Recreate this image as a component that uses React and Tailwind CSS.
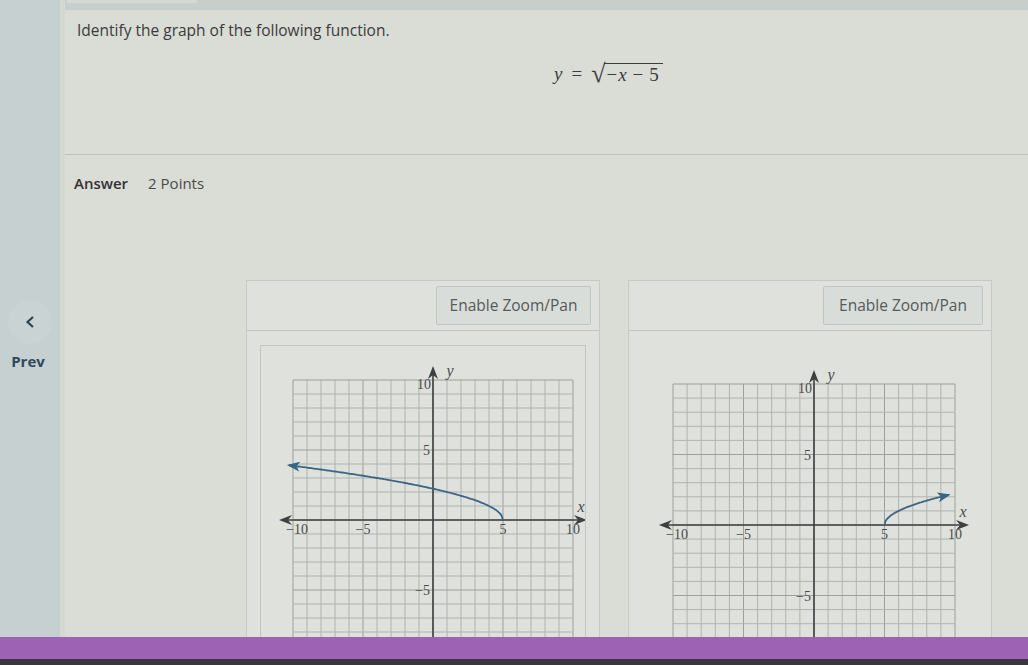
import React from "react";

function Graph({ w, h, ox, oy, u, dir }) {
  const vlines = [];
  for (let i = -10; i <= 10; i++) {
    vlines.push(
      <line key={"v" + i} x1={ox + i * u} y1={oy - 10 * u} x2={ox + i * u} y2={h} stroke={i % 5 === 0 ? "#9aa19c" : "#aeb4af"} strokeWidth="1" />
    );
  }
  const hlines = [];
  for (let j = 10; j >= -12; j--) {
    const y = oy - j * u;
    if (y > h) continue;
    hlines.push(
      <line key={"h" + j} x1={ox - 10 * u} y1={y} x2={ox + 10 * u} y2={y} stroke={j % 5 === 0 ? "#9aa19c" : "#aeb4af"} strokeWidth="1" />
    );
  }
  const pts = [];
  if (dir < 0) {
    for (let x = 5; x >= -10.3; x -= 0.1) pts.push([x, Math.sqrt(Math.max(0, 5 - x))]);
  } else {
    for (let x = 5; x <= 9.6; x += 0.05) pts.push([x, Math.sqrt(Math.max(0, x - 5))]);
  }
  const d = pts.map((p, i) => (i === 0 ? "M" : "L") + (ox + p[0] * u).toFixed(1) + " " + (oy - p[1] * u).toFixed(1)).join(" ");
  const last = pts[pts.length - 1];
  const prev = pts[pts.length - 4];
  const lx = ox + last[0] * u, ly = oy - last[1] * u;
  const px = ox + prev[0] * u, py = oy - prev[1] * u;
  const ang = Math.atan2(ly - py, lx - px);
  const ah = 11, aw = 5;
  const bx = lx - ah * Math.cos(ang), by = ly - ah * Math.sin(ang);
  const arrow = `M${(lx + 2 * Math.cos(ang)).toFixed(1)} ${(ly + 2 * Math.sin(ang)).toFixed(1)} L${(bx + aw * Math.sin(ang)).toFixed(1)} ${(by - aw * Math.cos(ang)).toFixed(1)} L${(bx + 3 * Math.cos(ang)).toFixed(1)} ${(by + 3 * Math.sin(ang)).toFixed(1)} L${(bx - aw * Math.sin(ang)).toFixed(1)} ${(by + aw * Math.cos(ang)).toFixed(1)} Z`;
  const txt = { fontFamily: "'Liberation Serif', serif", fontSize: 14, fill: "#4a4a4a" };
  const xl = ox - 11 * u, xr = ox + 11 * u, yt = oy - 11 * u;
  return (
    <svg width={w} height={h} className="block">
      {vlines}
      {hlines}
      <line x1={xl + 4} y1={oy} x2={xr - 4} y2={oy} stroke="#3f3f3f" strokeWidth="1.6" />
      <path d={`M${xl} ${oy} L${xl + 13} ${oy - 5} L${xl + 9} ${oy} L${xl + 13} ${oy + 5} Z`} fill="#3f3f3f" />
      <path d={`M${xr} ${oy} L${xr - 13} ${oy - 5} L${xr - 9} ${oy} L${xr - 13} ${oy + 5} Z`} fill="#3f3f3f" />
      <line x1={ox} y1={yt + 4} x2={ox} y2={h} stroke="#3f3f3f" strokeWidth="1.6" />
      <path d={`M${ox} ${yt} L${ox - 5} ${yt + 13} L${ox} ${yt + 9} L${ox + 5} ${yt + 13} Z`} fill="#3f3f3f" />
      <path d={d} fill="none" stroke="#3b6585" strokeWidth="1.8" />
      <path d={arrow} fill="#3b6585" />
      <text x={ox - 2} y={oy - 10 * u + 9} textAnchor="end" style={txt}>10</text>
      <text x={ox - 3} y={oy - 5 * u + 5} textAnchor="end" style={txt}>5</text>
      <text x={ox - 3} y={oy + 5 * u + 5} textAnchor="end" style={txt}>−5</text>
      <text x={ox - 10 * u + 4} y={oy + 14} textAnchor="middle" style={txt}>−10</text>
      <text x={ox - 5 * u} y={oy + 14} textAnchor="middle" style={txt}>−5</text>
      <text x={ox + 5 * u} y={oy + 14} textAnchor="middle" style={txt}>5</text>
      <text x={ox + 10 * u} y={oy + 14} textAnchor="middle" style={txt}>10</text>
      <text x={ox + 10 * u + 8} y={oy - 8} textAnchor="middle" style={{ ...txt, fontStyle: "italic", fontSize: 16 }}>x</text>
      <text x={ox + 17} y={yt + 10} textAnchor="middle" style={{ ...txt, fontStyle: "italic", fontSize: 16 }}>y</text>
    </svg>
  );
}

function Card({ width, btnW, children, innerBorder }) {
  return (
    <div className="flex flex-col border border-[#c6cac5] bg-[#dfe1dc] h-[360px] overflow-hidden shrink-0" style={{ width }}>
      <div className="flex justify-end items-center h-[50px] shrink-0 border-b border-[#c2c6c1] pr-[8px]">
        <button className="h-[39px] border border-[#c0c5c1] bg-[#d9ddd9] rounded-[2px] text-[15.5px] text-[#555a5a] font-['Open_Sans',sans-serif]" style={{ width: btnW }}>
          Enable Zoom/Pan
        </button>
      </div>
      <div className="flex-1 min-h-0 px-[13px] pt-[14px]">
        <div className={"h-full overflow-hidden border " + (innerBorder ? "border-[#c2c6c1]" : "border-transparent")}>{children}</div>
      </div>
    </div>
  );
}

export default function App() {
  return (
    <div className="w-[1028px] h-[665px] overflow-hidden flex flex-col bg-[#dadcd6] font-['Open_Sans',sans-serif]">
      <div className="flex flex-1 min-h-0">
        <div className="w-[65px] shrink-0 bg-[#c6d0d1] flex flex-col items-center border-r-[5px] border-[#d5d9d3]">
          <div className="mt-[300px] w-[44px] h-[44px] rounded-full bg-[#c9d3d4] flex items-center justify-center">
            <svg width="12" height="14" viewBox="0 0 12 14"><path d="M9 2 L3.5 7 L9 12" fill="none" stroke="#2c4556" strokeWidth="2.2" /></svg>
          </div>
          <div className="mt-[6px] mr-[4px] text-[15px] font-bold text-[#2e4a5c] leading-[22px]">Prev</div>
        </div>
        <div className="flex-1 flex flex-col min-w-0">
          <div className="h-[10px] bg-[#c8cfcb] flex shrink-0">
            <div className="ml-[2px] w-[130px] h-[3px] bg-[#d4d9d5]" />
          </div>
          <div className="h-[145px] shrink-0 border-b border-[#bfc3be] flex flex-col pl-[12px]">
            <div className="mt-[9px] text-[15.5px] text-[#3b3b3b] leading-[22px]">Identify the graph of the following function.</div>
            <div className="mt-[20px] pl-[477px] flex items-end text-[19px] text-[#3d3d3d] font-['Liberation_Serif',serif] leading-[26px]">
              <span className="italic">y</span>
              <span className="mx-[9px]">=</span>
              <span className="text-[26px] leading-[26px] mr-[-1px]">√</span>
              <span className="border-t border-[#3d3d3d] leading-[22px] pl-[2px] pr-[4px] mb-[1px] flex">
                <span>−</span>
                <span className="italic ml-[1px]">x</span>
                <span className="mx-[6px]">−</span>
                <span>5</span>
              </span>
            </div>
          </div>
          <div className="mt-[17px] pl-[9px] flex items-baseline text-[15px] leading-[22px] shrink-0">
            <span className="font-semibold text-[#333]">Answer</span>
            <span className="ml-[20px] text-[#4a4a4a]">2 Points</span>
          </div>
          <div className="mt-[86px] flex pl-[181px] gap-[28px]">
            <Card width={354} btnW={155} innerBorder>
              <Graph w={325} h={300} ox={172} oy={174} u={14} dir={-1} />
            </Card>
            <Card width={364} btnW={160}>
              <Graph w={335} h={300} ox={171} oy={179} u={14.1} dir={1} />
            </Card>
          </div>
        </div>
      </div>
      <div className="h-[22px] bg-[#9d62b4] shrink-0" />
      <div className="h-[6px] bg-[#3b3540] shrink-0" />
    </div>
  );
}
